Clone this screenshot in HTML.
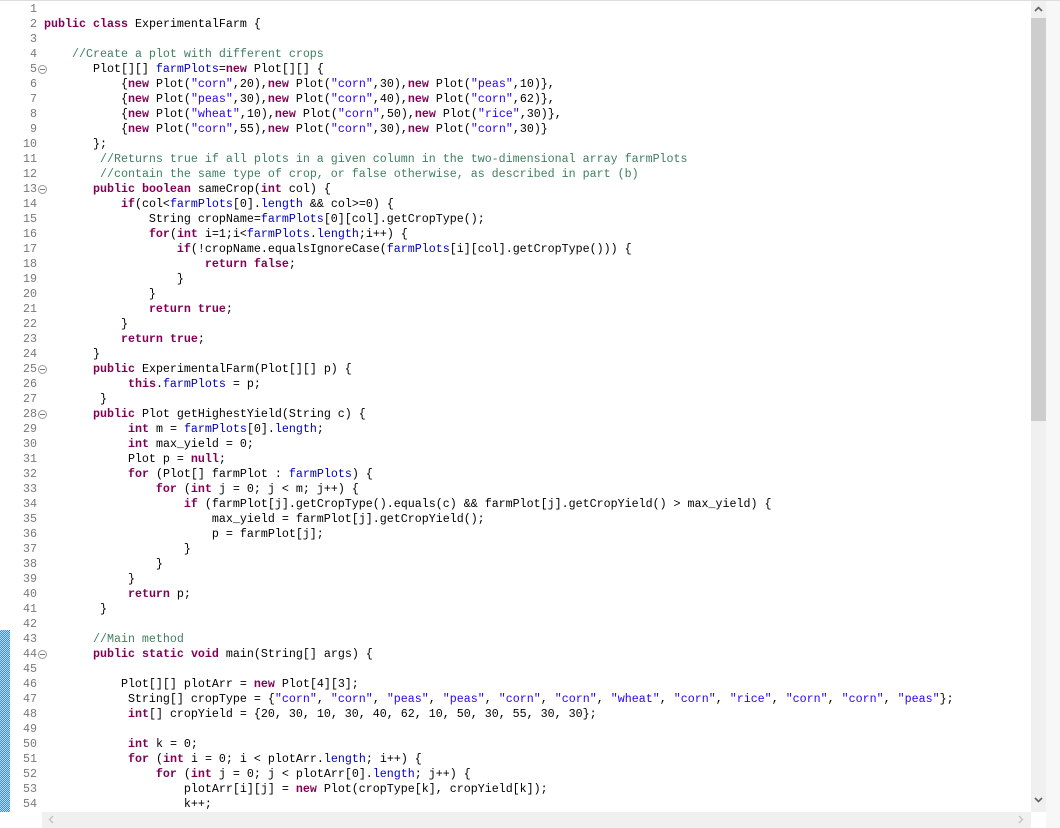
<!DOCTYPE html>
<html><head><meta charset="utf-8"><style>
body{margin:0;width:1060px;height:828px;overflow:hidden;background:#fff;position:relative;font-family:"Liberation Mono",monospace;font-size:11.67px}
#top{position:absolute;left:0;top:0;width:1060px;height:1px;background:#ddd}
#nums{position:absolute;left:0;top:2px;width:37px;text-align:right;color:#787878;line-height:15px;white-space:pre}
#code{position:absolute;left:44px;top:2px;line-height:15px;white-space:pre;color:#000}
.k{color:#7f0055;font-weight:bold}.s{color:#2a00ff}.c{color:#3f7f5f}.f{color:#0000c0}
.fold{position:absolute;left:38px;width:7px;height:7px;border:1px solid #999;border-radius:50%;font-size:0}
.fold:after{content:"";position:absolute;left:1px;top:3px;width:5px;height:1px;background:#777}
#bar{position:absolute;left:0;top:630px;width:10px;height:182px;background:repeating-conic-gradient(#3d8fd8 0 25%,#b6d6f2 0 50%) 0 0/2px 2px}
#vs{position:absolute;left:1031px;top:1px;width:15px;height:811px;background:#f0f0f0}
#th{position:absolute;left:1031px;top:18px;width:15px;height:403px;background:#cdcdcd}
#rs{position:absolute;left:1046px;top:1px;width:14px;height:827px;background:#f7f7f7}
#hs{position:absolute;left:42px;top:812px;width:989px;height:16px;background:#f0f0f0}
svg{position:absolute}
</style></head><body>
<div id="top"></div>
<div id="bar"></div>
<div id="nums">1
2
3
4
5
6
7
8
9
10
11
12
13
14
15
16
17
18
19
20
21
22
23
24
25
26
27
28
29
30
31
32
33
34
35
36
37
38
39
40
41
42
43
44
45
46
47
48
49
50
51
52
53
54</div>
<div class="fold" style="top:65px"></div>
<div class="fold" style="top:185px"></div>
<div class="fold" style="top:365px"></div>
<div class="fold" style="top:410px"></div>
<div class="fold" style="top:650px"></div>
<div id="code">
<span class="k">public</span> <span class="k">class</span> ExperimentalFarm {

    <span class="c">//Create a plot with different crops</span>
       Plot[][] <span class="f">farmPlots</span>=<span class="k">new</span> Plot[][] {
           {<span class="k">new</span> Plot(<span class="s">"corn"</span>,20),<span class="k">new</span> Plot(<span class="s">"corn"</span>,30),<span class="k">new</span> Plot(<span class="s">"peas"</span>,10)},
           {<span class="k">new</span> Plot(<span class="s">"peas"</span>,30),<span class="k">new</span> Plot(<span class="s">"corn"</span>,40),<span class="k">new</span> Plot(<span class="s">"corn"</span>,62)},
           {<span class="k">new</span> Plot(<span class="s">"wheat"</span>,10),<span class="k">new</span> Plot(<span class="s">"corn"</span>,50),<span class="k">new</span> Plot(<span class="s">"rice"</span>,30)},
           {<span class="k">new</span> Plot(<span class="s">"corn"</span>,55),<span class="k">new</span> Plot(<span class="s">"corn"</span>,30),<span class="k">new</span> Plot(<span class="s">"corn"</span>,30)}
       };
        <span class="c">//Returns true if all plots in a given column in the two-dimensional array farmPlots</span>
        <span class="c">//contain the same type of crop, or false otherwise, as described in part (b)</span>
       <span class="k">public</span> <span class="k">boolean</span> sameCrop(<span class="k">int</span> col) {
           <span class="k">if</span>(col&lt;<span class="f">farmPlots</span>[0].<span class="f">length</span> &amp;&amp; col&gt;=0) {
               String cropName=<span class="f">farmPlots</span>[0][col].getCropType();
               <span class="k">for</span>(<span class="k">int</span> i=1;i&lt;<span class="f">farmPlots</span>.<span class="f">length</span>;i++) {
                   <span class="k">if</span>(!cropName.equalsIgnoreCase(<span class="f">farmPlots</span>[i][col].getCropType())) {
                       <span class="k">return</span> <span class="k">false</span>;
                   }
               }
               <span class="k">return</span> <span class="k">true</span>;
           }
           <span class="k">return</span> <span class="k">true</span>;
       }
       <span class="k">public</span> ExperimentalFarm(Plot[][] p) {
            <span class="k">this</span>.<span class="f">farmPlots</span> = p;
        }
       <span class="k">public</span> Plot getHighestYield(String c) {
            <span class="k">int</span> m = <span class="f">farmPlots</span>[0].<span class="f">length</span>;
            <span class="k">int</span> max_yield = 0;
            Plot p = <span class="k">null</span>;
            <span class="k">for</span> (Plot[] farmPlot : <span class="f">farmPlots</span>) {
                <span class="k">for</span> (<span class="k">int</span> j = 0; j &lt; m; j++) {
                    <span class="k">if</span> (farmPlot[j].getCropType().equals(c) &amp;&amp; farmPlot[j].getCropYield() &gt; max_yield) {
                        max_yield = farmPlot[j].getCropYield();
                        p = farmPlot[j];
                    }
                }
            }
            <span class="k">return</span> p;
        }

       <span class="c">//Main method</span>
       <span class="k">public</span> <span class="k">static</span> <span class="k">void</span> main(String[] args) {

           Plot[][] plotArr = <span class="k">new</span> Plot[4][3];
            String[] cropType = {<span class="s">"corn"</span>, <span class="s">"corn"</span>, <span class="s">"peas"</span>, <span class="s">"peas"</span>, <span class="s">"corn"</span>, <span class="s">"corn"</span>, <span class="s">"wheat"</span>, <span class="s">"corn"</span>, <span class="s">"rice"</span>, <span class="s">"corn"</span>, <span class="s">"corn"</span>, <span class="s">"peas"</span>};
            <span class="k">int</span>[] cropYield = {20, 30, 10, 30, 40, 62, 10, 50, 30, 55, 30, 30};

            <span class="k">int</span> k = 0;
            <span class="k">for</span> (<span class="k">int</span> i = 0; i &lt; plotArr.<span class="f">length</span>; i++) {
                <span class="k">for</span> (<span class="k">int</span> j = 0; j &lt; plotArr[0].<span class="f">length</span>; j++) {
                    plotArr[i][j] = <span class="k">new</span> Plot(cropType[k], cropYield[k]);
                    k++;</div>
<div id="vs"></div><div id="th"></div><div id="rs"></div><div id="hs"></div>
<svg style="left:1034px;top:6px" width="9" height="6"><path d="M1 5 L4.5 1.5 L8 5" fill="none" stroke="#606060" stroke-width="1.6"/></svg>
<svg style="left:1034px;top:797px" width="9" height="6"><path d="M1 1 L4.5 4.5 L8 1" fill="none" stroke="#606060" stroke-width="1.6"/></svg>
<svg style="left:48px;top:815px" width="6" height="9"><path d="M5 1 L1.5 4.5 L5 8" fill="none" stroke="#c0c0c0" stroke-width="1.3"/></svg>
<svg style="left:1018px;top:815px" width="6" height="9"><path d="M1 1 L4.5 4.5 L1 8" fill="none" stroke="#c0c0c0" stroke-width="1.3"/></svg>
</body></html>
